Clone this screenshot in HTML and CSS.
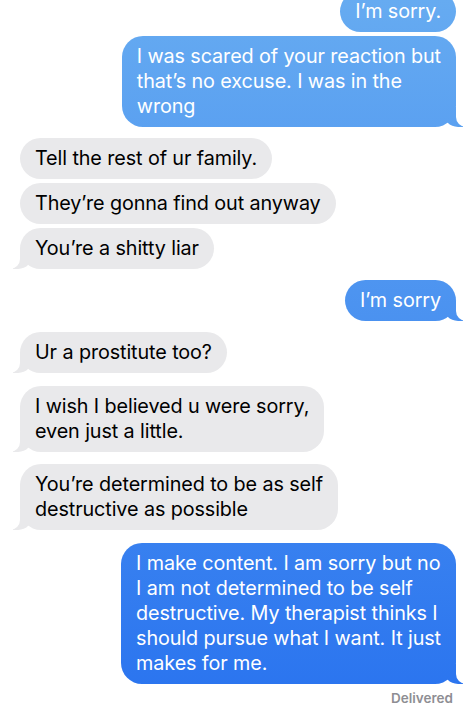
FILE: index.html
```html
<!DOCTYPE html>
<html>
<head>
    <title>Messages</title>
    <link rel="stylesheet" href="styles.css">
</head>
<body>
    <div class="chat">
        <div class="msg me">I’m sorry.</div>
        <div class="msg me tail">I was scared of your reaction but<br>that’s no excuse. I was in the<br>wrong</div>

        <div class="msg them new-group">Tell the rest of ur family.</div>
        <div class="msg them">They’re gonna find out anyway</div>
        <div class="msg them tail">You’re a shitty liar</div>

        <div class="msg me tail new-group">I’m sorry</div>

        <div class="msg them tail new-group">Ur a prostitute too?</div>
        <div class="msg them tail wide-gap">I wish I believed u were sorry,<br>even just a little.</div>
        <div class="msg them tail wide-gap">You’re determined to be as self<br>destructive as possible</div>

        <div class="msg me tail wide-gap">I make content. I am sorry but no<br>I am not determined to be self<br>destructive. My therapist thinks I<br>should pursue what I want. It just<br>makes for me.</div>
        <div class="status">Delivered</div>
    </div>
</body>
</html>
```

FILE: styles.css
```css
body {
    margin: 0;
    background-color: #fff;
    font-family: Inter, "Noto Sans", sans-serif;
    overflow: hidden;
}
.chat {
    display: flex;
    flex-direction: column;
    padding: 0 18px 0 20px;
    margin-top: -9px;
}
.msg {
    position: relative;
    max-width: 350px;
    padding: 8px 15px;
    border-radius: 21px;
    font-size: 19.8px;
    line-height: 25px;
    letter-spacing: -0.1px;
    margin-top: 4px;
}
.msg:first-child {
    margin-top: 0;
}
.new-group {
    margin-top: 11px;
}
.wide-gap {
    margin-top: 12.5px;
}
.me {
    align-self: flex-end;
    color: #fff;
    background: linear-gradient(#66abf1, #2872ef) fixed;
}
.them {
    align-self: flex-start;
    color: #000;
    background-color: #e9e9eb;
}
.tail::before,
.tail::after {
    content: "";
    position: absolute;
    bottom: 0;
    height: 20px;
}
.them.tail::before {
    left: -7px;
    width: 20px;
    background-color: #e9e9eb;
    border-bottom-right-radius: 15px;
}
.them.tail::after {
    left: -10px;
    width: 10px;
    background-color: #fff;
    border-bottom-right-radius: 10px;
}
.me.tail::before {
    right: -7px;
    width: 20px;
    background: linear-gradient(#66abf1, #2872ef) fixed;
    border-bottom-left-radius: 15px;
}
.me.tail::after {
    right: -10px;
    width: 10px;
    background-color: #fff;
    border-bottom-left-radius: 10px;
}
.status {
    align-self: flex-end;
    margin: 6px 3px 0 0;
    font-size: 13.5px;
    font-weight: 600;
    color: #8e8e93;
}
```
